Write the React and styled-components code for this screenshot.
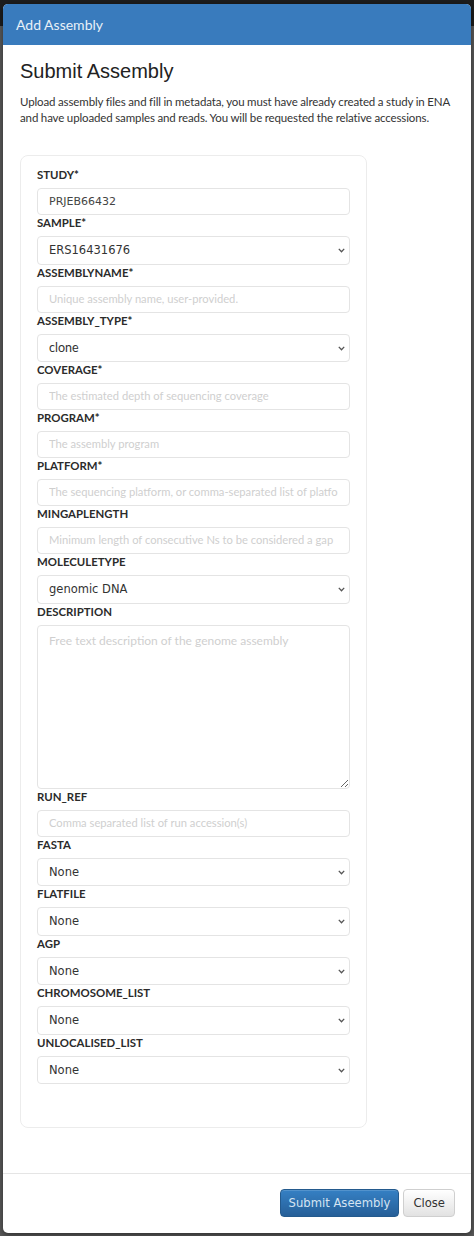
import React from "react";
import styled, { createGlobalStyle } from "styled-components";

const GlobalStyle = createGlobalStyle`
  html, body {
    margin: 0;
    padding: 0;
  }
  body {
    background: linear-gradient(#1d1d1d 0, #1d1d1d 26px, #5a5a5a 26px);
    padding: 4px 3px 4px;
    font-family: Lato, "Open Sans", sans-serif;
  }
`;

const Modal = styled.div`
  width: 468px;
  background: #fff;
  border-radius: 5px;
  overflow: hidden;
  box-shadow: 0 2px 6px rgba(0, 0, 0, 0.5);
`;

const Header = styled.div`
  height: 41px;
  background: #397bbd;
  color: #e8f0f8;
  font-family: Lato, sans-serif;
  font-size: 14px;
  display: flex;
  align-items: center;
  padding: 0 13px;
  box-sizing: border-box;
`;

const Body = styled.div`
  padding: 13px 17px 45px;
`;

const Title = styled.h4`
  margin: 0;
  font-family: "Liberation Sans", Arial, sans-serif;
  font-weight: 400;
  font-size: 20px;
  line-height: 26px;
  color: #222;
`;

const Lead = styled.p`
  margin: 10px 0 29px;
  font-family: Lato, sans-serif;
  font-size: 11.5px;
  letter-spacing: -0.12px;
  word-spacing: -0.2px;
  line-height: 16px;
  color: #333;
`;

const Card = styled.div`
  width: 347px;
  box-sizing: border-box;
  border: 1px solid #ececec;
  border-radius: 8px;
  padding: 11px 16px 43px;
`;

const Label = styled.label`
  display: block;
  font-family: Lato, sans-serif;
  font-weight: 700;
  font-size: 11.4px;
  line-height: 16px;
  margin-bottom: 5px;
  color: #2b2b2b;
`;

const Input = styled.input`
  display: block;
  width: 100%;
  box-sizing: border-box;
  height: 27px;
  border: 1px solid #e4e4e4;
  border-radius: 4px;
  padding: 0 11px;
  font-family: "DejaVu Sans", sans-serif;
  font-size: 11px;
  color: #444;
  outline: none;
  &::placeholder {
    font-family: Lato, sans-serif;
    font-size: 11.2px;
    color: #cfcfcf;
  }
`;

const TextArea = styled.textarea`
  display: block;
  width: 100%;
  box-sizing: border-box;
  height: 164px;
  border: 1px solid #e4e4e4;
  border-radius: 4px;
  padding: 7px 11px;
  font-family: Lato, sans-serif;
  font-size: 12px;
  color: #444;
  outline: none;
  margin: 0;
  &::placeholder {
    color: #cfcfcf;
  }
`;

const SelectWrap = styled.div`
  position: relative;
  height: 28.5px;
`;

const Select = styled.select`
  appearance: none;
  -webkit-appearance: none;
  display: block;
  width: 100%;
  height: 100%;
  box-sizing: border-box;
  border: 1px solid #e4e4e4;
  border-radius: 4px;
  padding: 0 11px;
  background: #fff;
  font-family: ${(p) => (p.$lato ? "Lato, sans-serif" : '"DejaVu Sans", sans-serif')};
  font-size: ${(p) => (p.$lato ? "12.5px" : "11.5px")};
  color: #333;
  outline: none;
`;

const Chevron = styled.svg`
  position: absolute;
  right: 5px;
  top: 50%;
  width: 7px;
  height: 5px;
  margin-top: -2px;
  pointer-events: none;
`;

const Footer = styled.div`
  border-top: 1px solid #e5e5e5;
  padding: 15px 16px 16px;
  display: flex;
  justify-content: flex-end;
  gap: 4px;
`;

const Button = styled.button`
  height: 28px;
  border-radius: 4px;
  font-family: "DejaVu Sans", sans-serif;
  font-size: 11.6px;
  padding: 0 ${(p) => (p.$primary ? "8px" : "9px")};
  border: 1px solid ${(p) => (p.$primary ? "#245a8d" : "#cfcfcf")};
  color: ${(p) => (p.$primary ? "#d6e4f2" : "#333")};
  background: ${(p) =>
    p.$primary
      ? "linear-gradient(#3580c4, #265f98)"
      : "linear-gradient(#ffffff, #e2e2e2)"};
  box-shadow: ${(p) =>
    p.$primary ? "inset 0 1px 0 rgba(255,255,255,0.15)" : "inset 0 1px 0 #fff"};
`;

const fields = [
  { name: "STUDY*", type: "input", value: "PRJEB66432" },
  { name: "SAMPLE*", type: "select", value: "ERS16431676" },
  { name: "ASSEMBLYNAME*", type: "input", placeholder: "Unique assembly name, user-provided." },
  { name: "ASSEMBLY_TYPE*", type: "select", value: "clone", lato: true },
  { name: "COVERAGE*", type: "input", placeholder: "The estimated depth of sequencing coverage" },
  { name: "PROGRAM*", type: "input", placeholder: "The assembly program" },
  {
    name: "PLATFORM*",
    type: "input",
    placeholder: "The sequencing platform, or comma-separated list of platforms",
  },
  {
    name: "MINGAPLENGTH",
    type: "input",
    placeholder: "Minimum length of consecutive Ns to be considered a gap",
  },
  { name: "MOLECULETYPE", type: "select", value: "genomic DNA" },
  { name: "DESCRIPTION", type: "textarea", placeholder: "Free text description of the genome assembly" },
  { name: "RUN_REF", type: "input", placeholder: "Comma separated list of run accession(s)" },
  { name: "FASTA", type: "select", value: "None" },
  { name: "FLATFILE", type: "select", value: "None" },
  { name: "AGP", type: "select", value: "None" },
  { name: "CHROMOSOME_LIST", type: "select", value: "None" },
  { name: "UNLOCALISED_LIST", type: "select", value: "None" },
];

const Field = ({ field }) => {
  let control;
  if (field.type === "select") {
    control = (
      <SelectWrap>
        <Select $lato={field.lato} defaultValue={field.value}>
          <option>{field.value}</option>
        </Select>
        <Chevron viewBox="0 0 7 5">
          <path d="M0.8 0.9 L3.5 3.8 L6.2 0.9" fill="none" stroke="#555" strokeWidth="1.3" />
        </Chevron>
      </SelectWrap>
    );
  } else if (field.type === "textarea") {
    control = <TextArea placeholder={field.placeholder} />;
  } else {
    control = <Input defaultValue={field.value} placeholder={field.placeholder} />;
  }
  return (
    <div>
      <Label>{field.name}</Label>
      {control}
    </div>
  );
};

const App = () => {
  return (
    <>
      <GlobalStyle />
      <Modal>
        <Header>Add Assembly</Header>
        <Body>
          <Title>Submit Assembly</Title>
          <Lead>
            Upload assembly files and fill in metadata, you must have already created a study in ENA
            and have uploaded samples and reads. You will be requested the relative accessions.
          </Lead>
          <Card>
            {fields.map((f) => (
              <Field key={f.name} field={f} />
            ))}
          </Card>
        </Body>
        <Footer>
          <Button $primary>Submit Aseembly</Button>
          <Button>Close</Button>
        </Footer>
      </Modal>
    </>
  );
};

export default App;
